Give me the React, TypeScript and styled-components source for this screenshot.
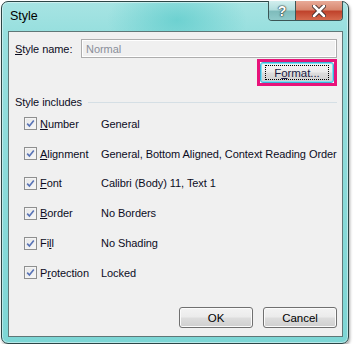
import React from 'react'
import styled, { createGlobalStyle } from 'styled-components'

const GlobalStyle = createGlobalStyle`
  body {
    margin: 0;
    background: #ffffff;
    font-family: 'Liberation Sans', Arial, sans-serif;
  }
`

const rows = [
  { label: 'Number', key: 0, value: 'General' },
  { label: 'Alignment', key: 0, value: 'General, Bottom Aligned, Context Reading Order' },
  { label: 'Font', key: 0, value: 'Calibri (Body) 11, Text 1' },
  { label: 'Border', key: 0, value: 'No Borders' },
  { label: 'Fill', key: 2, value: 'No Shading' },
  { label: 'Protection', key: 1, value: 'Locked' },
]

const Access = ({ text, at }: { text: string; at: number }) => (
  <>
    {text.slice(0, at)}
    <u>{text[at]}</u>
    {text.slice(at + 1)}
  </>
)

const Check = () => (
  <CheckBox>
    <svg width="9" height="9" viewBox="0 0 9 9">
      <path d="M1.2 4.6 L3.4 7 L7.8 1.4" fill="none" stroke="#5873b6" strokeWidth="1.6" />
    </svg>
  </CheckBox>
)

export default function App() {
  return (
    <>
      <GlobalStyle />
      <Window>
        <TitleBar>
          <Title>Style</Title>
          <CaptionButtons>
            <HelpButton>?</HelpButton>
            <CloseButton>
              <svg width="14" height="12" viewBox="0 0 14 12">
                <path d="M2 1 L12 11 M12 1 L2 11" stroke="#3a2a2a" strokeWidth="4.4" strokeLinecap="round" />
                <path d="M2 1 L12 11 M12 1 L2 11" stroke="#ffffff" strokeWidth="2.6" strokeLinecap="round" />
              </svg>
            </CloseButton>
          </CaptionButtons>
        </TitleBar>
        <Client>
          <NameRow>
            <Label><Access text="Style name:" at={0} /></Label>
            <NameInput>Normal</NameInput>
          </NameRow>
          <FormatRow>
            <Highlight>
              <Button focused>
                <span><Access text="Format..." at={1} /></span>
              </Button>
            </Highlight>
          </FormatRow>
          <GroupHeader>
            <span>Style includes</span>
            <Rule />
          </GroupHeader>
          <List>
            {rows.map((r) => (
              <Row key={r.label}>
                <Check />
                <RowLabel><Access text={r.label} at={r.key} /></RowLabel>
                <RowValue>{r.value}</RowValue>
              </Row>
            ))}
          </List>
          <Footer>
            <Button>OK</Button>
            <Button>Cancel</Button>
          </Footer>
        </Client>
      </Window>
    </>
  )
}

const Window = styled.div`
  margin: 1px 0 0 1px;
  width: 348px;
  height: 343px;
  box-sizing: border-box;
  border: 1px solid #2c4646;
  border-radius: 7px;
  padding: 0 5px 6px 6px;
  display: flex;
  flex-direction: column;
  background:
    radial-gradient(ellipse 70px 40px at 175px 18px, rgba(70, 196, 196, 0.55), rgba(70, 196, 196, 0) 100%),
    linear-gradient(180deg, #a7e4e3 0px, #97dfde 30px, #7dd6d5 100%);
  box-shadow: inset 0 0 0 1px rgba(255, 255, 255, 0.45), 1px 2px 3px rgba(0, 0, 0, 0.35);
`

const TitleBar = styled.div`
  height: 29px;
  display: flex;
  justify-content: space-between;
  align-items: flex-start;
  flex-shrink: 0;
`

const Title = styled.div`
  padding: 7px 0 0 2px;
  font-size: 12.5px;
  color: #000;
`

const CaptionButtons = styled.div`
  display: flex;
  height: 19px;
  margin-top: -1px;
  border: 1px solid #3b5656;
  border-top: none;
  border-radius: 0 0 4px 4px;
  overflow: hidden;
`

const HelpButton = styled.div`
  width: 26px;
  display: flex;
  align-items: center;
  justify-content: center;
  border-right: 1px solid #3b5656;
  background: linear-gradient(180deg, #d2eeee 0%, #b2dede 45%, #7fbcbc 55%, #8fcaca 100%);
  color: #fff;
  font: bold 14px 'Liberation Sans', Arial, sans-serif;
  text-shadow: 0 0 1px #2a3a3a, 0 0 1px #2a3a3a, 0 0 2px #2a3a3a;
`

const CloseButton = styled.div`
  width: 46px;
  display: flex;
  align-items: center;
  justify-content: center;
  background: linear-gradient(180deg, #e8aa98 0%, #d88870 45%, #c0432c 55%, #d56a4e 100%);
`

const Client = styled.div`
  flex: 1;
  box-sizing: border-box;
  border: 1px solid #5f7777;
  background: #f0f0f0;
  padding: 7px 5px 8px 6px;
  display: flex;
  flex-direction: column;
  font-size: 11px;
  letter-spacing: -0.06px;
  color: #0c0c1e;
`

const NameRow = styled.div`
  display: flex;
  align-items: center;
  height: 19px;
`

const Label = styled.div`
  width: 66px;
`

const NameInput = styled.div`
  flex: 1;
  height: 19px;
  box-sizing: border-box;
  border: 1px solid #adadad;
  box-shadow: inset 0 0 0 1px #ffffff;
  background: #f0f0f0;
  color: #8a8f9a;
  padding: 3px 0 0 4px;
`

const FormatRow = styled.div`
  display: flex;
  justify-content: flex-end;
  margin-top: 1px;
`

const Highlight = styled.div`
  border: 3px solid #e8137a;
  background: #ffffff;
  display: flex;
`

const Button = styled.div<{ focused?: boolean }>`
  width: 74px;
  height: 21px;
  box-sizing: border-box;
  border: 1px solid ${(p) => (p.focused ? '#3cb2d6' : '#707070')};
  border-radius: 3px;
  display: flex;
  align-items: center;
  justify-content: center;
  background: linear-gradient(180deg, #f3f3f3 0%, #ebebeb 48%, #dddddd 52%, #cfcfcf 100%);
  box-shadow: ${(p) => (p.focused ? 'inset 0 0 0 1px #7fe0f4' : 'inset 0 0 0 1px #fbfbfb')};
  color: #000;
  font-size: 11.5px;

  span {
    border: 1px dotted #000;
    width: 62px;
    height: 13px;
    display: flex;
    align-items: center;
    justify-content: center;
    color: #1a1a44;
  }
`

const GroupHeader = styled.div`
  display: flex;
  align-items: center;
  gap: 6px;
  margin-top: 9px;
  height: 14px;
`

const Rule = styled.div`
  flex: 1;
  height: 1px;
  background: #d5dfe5;
`

const List = styled.div`
  display: flex;
  flex-direction: column;
`

const Row = styled.div`
  display: flex;
  align-items: center;
  height: 29.8px;
  padding-left: 9px;
`

const CheckBox = styled.div`
  flex: none;
  width: 13px;
  height: 13px;
  box-sizing: border-box;
  border: 1px solid #8e8f8f;
  background: linear-gradient(135deg, #e6e6e6 0%, #f8f8f8 100%);
  box-shadow: inset 0 0 0 1px #f4f4f4;
  display: flex;
  align-items: center;
  justify-content: center;
`

const RowLabel = styled.div`
  flex: 0 0 61px;
  min-width: 0;
  margin-left: 3px;
  white-space: nowrap;
`

const RowValue = styled.div`
  white-space: nowrap;
`

const Footer = styled.div`
  margin-top: auto;
  display: flex;
  justify-content: flex-end;
  gap: 10px;
`
